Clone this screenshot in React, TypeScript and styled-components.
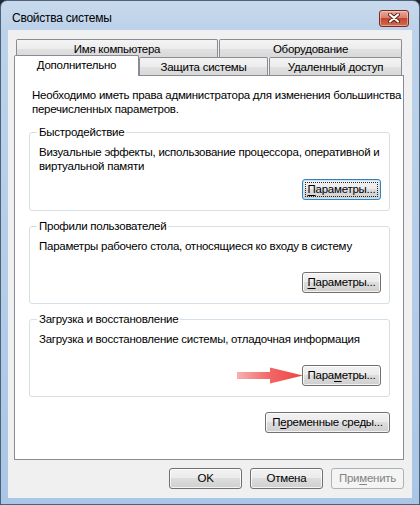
import styled, { createGlobalStyle, css } from "styled-components";

const GlobalStyle = createGlobalStyle`
  html, body {
    margin: 0;
    padding: 0;
    background: #1f2a36;
  }
  body {
    font-family: "Liberation Sans", Arial, sans-serif;
    font-size: 11.5px;
    letter-spacing: -0.25px;
    color: #000;
  }
`;

const Window = styled.div`
  width: 420px;
  height: 505px;
  box-sizing: border-box;
  border: 1px solid #4d6178;
  border-radius: 7px 7px 0 0;
  background: linear-gradient(to bottom, #c8d9ec 0, #bcd2ea 30px, #b3cce8 60%, #aac6e6 100%);
  display: flex;
  flex-direction: column;
  padding: 0 7px 6px 7px;
`;

const TitleBar = styled.div`
  height: 29px;
  box-sizing: border-box;
  padding: 5px 3px 0 4px;
  display: flex;
  align-items: center;
  justify-content: space-between;
`;

const Title = styled.span`
  font-size: 12px;
  color: #000;
`;

const CloseButton = styled.div`
  width: 30px;
  height: 17px;
  box-sizing: border-box;
  border: 1px solid #7a2a1d;
  border-radius: 3px;
  background: linear-gradient(to bottom, #e9a99a 0%, #d8806c 45%, #c4452e 50%, #d26a52 100%);
  box-shadow: inset 0 0 0 1px rgba(255, 220, 210, 0.5);
  display: flex;
  align-items: center;
  justify-content: center;
`;

const Client = styled.div`
  flex: 1;
  display: flex;
  flex-direction: column;
  box-sizing: border-box;
  background: #f0f0f0;
  padding: 9px 8px 9px 6px;
`;

const TabRow = styled.div<{ $inset?: boolean }>`
  display: flex;
  align-items: flex-end;
  height: 18px;
  margin: 0 2px 0 ${({ $inset }) => ($inset ? "2px" : "0")};
`;

const Tab = styled.div<{ $width?: number; $active?: boolean; $spaced?: boolean }>`
  box-sizing: border-box;
  height: 18px;
  ${({ $width }) => ($width ? `width: ${$width}px;` : "flex: 1;")}
  margin-left: ${({ $spaced }) => ($spaced ? "1px" : "0")};
  border: 1px solid #898c95;
  border-bottom: none;
  border-radius: 2px 2px 0 0;
  background: linear-gradient(to bottom, #f4f4f4 0%, #ececec 50%, #e0e0e0 55%, #d9d9d9 100%);
  text-align: center;
  line-height: 18px;
  white-space: nowrap;
  ${({ $active }) =>
    $active &&
    css`
      position: relative;
      z-index: 1;
      height: 21px;
      margin-bottom: -1px;
      background: #fff;
      line-height: 18px;
    `}
`;

const Panel = styled.div`
  flex: 1;
  box-sizing: border-box;
  background: #fff;
  border: 1px solid #898c95;
  padding: 12px 13px 0 14px;
`;

const Text = styled.p`
  margin: 0;
  line-height: 14px;
  white-space: nowrap;
`;

const Intro = styled(Text)`
  margin-left: 3px;
`;

const Group = styled.div<{ $first?: boolean }>`
  margin-top: ${({ $first }) => ($first ? "16px" : "15px")};
  border: 1px solid #d5dfe5;
  border-radius: 3px;
  padding: 0 8px 10px 9px;
`;

const Legend = styled.span`
  display: block;
  width: fit-content;
  margin: -8px 0 6px -2px;
  padding: 0 2px;
  background: #fff;
  line-height: 14px;
`;

const ButtonRow = styled.div<{ $gap: number }>`
  position: relative;
  display: flex;
  justify-content: flex-end;
  gap: 8px;
  margin-top: ${({ $gap }) => $gap}px;
`;

const Button = styled.button<{ $width: number; $focused?: boolean }>`
  position: relative;
  width: ${({ $width }) => $width}px;
  height: 21px;
  box-sizing: border-box;
  padding: 0;
  border: 1px solid #707070;
  border-radius: 3px;
  background: linear-gradient(to bottom, #f2f2f2 0%, #ebebeb 49%, #dddddd 50%, #cfcfcf 100%);
  box-shadow: inset 0 0 0 1px rgba(255, 255, 255, 0.75);
  font-family: "Liberation Sans", Arial, sans-serif;
  font-size: 11.5px;
  letter-spacing: -0.25px;
  color: #000;
  line-height: 19px;
  white-space: nowrap;

  ${({ $focused }) =>
    $focused &&
    css`
      border-color: #3c7fb1;
      box-shadow: inset 0 0 0 1px #c4e5f8;
      &::after {
        content: "";
        position: absolute;
        inset: 2px;
        border: 1px dotted #222;
      }
    `}

  &:disabled {
    border-color: #adb2b5;
    background: #f4f4f4;
    box-shadow: none;
    color: #838383;
  }
`;

const Key = styled.span`
  text-decoration: underline;
  text-underline-offset: 2px;
`;

const Pointer = styled.svg`
  position: absolute;
  top: 2px;
  right: 78px;
`;

const Footer = styled.div`
  display: flex;
  justify-content: flex-end;
  gap: 8px;
  margin-top: 8px;
`;

const EnvRow = styled.div`
  display: flex;
  justify-content: flex-end;
  margin-top: 15px;
`;

const CloseGlyph = () => (
  <svg width="12" height="10" viewBox="0 0 12 10">
    <path d="M2 1.5 L10 8.5 M10 1.5 L2 8.5" stroke="#5a1d14" strokeWidth="4" strokeLinecap="round" />
    <path d="M2 1.5 L10 8.5 M10 1.5 L2 8.5" stroke="#ffffff" strokeWidth="2.2" strokeLinecap="round" />
  </svg>
);

const RedArrow = () => (
  <Pointer width="66" height="17" viewBox="0 0 66 17">
    <defs>
      <linearGradient id="arrowFill" x1="0" x2="1" y1="0" y2="0">
        <stop offset="0" stopColor="#f7b0b0" />
        <stop offset="0.5" stopColor="#f26666" />
        <stop offset="1" stopColor="#ee4444" />
      </linearGradient>
    </defs>
    <polygon points="0,5 33,5 33,0.5 66,8.5 33,16.5 33,12 0,12" fill="url(#arrowFill)" />
  </Pointer>
);

const App = () => {
  return (
    <>
      <GlobalStyle />
      <Window>
        <TitleBar>
          <Title>Свойства системы</Title>
          <CloseButton>
            <CloseGlyph />
          </CloseButton>
        </TitleBar>
        <Client>
          <TabRow $inset>
            <Tab $width={202}>Имя компьютера</Tab>
            <Tab $spaced>Оборудование</Tab>
          </TabRow>
          <TabRow>
            <Tab $width={125} $active>
              Дополнительно
            </Tab>
            <Tab $width={129}>Защита системы</Tab>
            <Tab $spaced>Удаленный доступ</Tab>
          </TabRow>
          <Panel>
            <Intro>
              Необходимо иметь права администратора для изменения большинства
              <br />
              перечисленных параметров.
            </Intro>

            <Group $first>
              <Legend>Быстродействие</Legend>
              <Text>
                Визуальные эффекты, использование процессора, оперативной и
                <br />
                виртуальной памяти
              </Text>
              <ButtonRow $gap={6}>
                <Button $width={79} $focused>
                  <Key>П</Key>араметры...
                </Button>
              </ButtonRow>
            </Group>

            <Group>
              <Legend>Профили пользователей</Legend>
              <Text>Параметры рабочего стола, относящиеся ко входу в систему</Text>
              <ButtonRow $gap={19}>
                <Button $width={79}>
                  <Key>П</Key>араметры...
                </Button>
              </ButtonRow>
            </Group>

            <Group>
              <Legend>Загрузка и восстановление</Legend>
              <Text>Загрузка и восстановление системы, отладочная информация</Text>
              <ButtonRow $gap={19}>
                <RedArrow />
                <Button $width={79}>
                  Пара<Key>м</Key>етры...
                </Button>
              </ButtonRow>
            </Group>

            <EnvRow>
              <Button $width={125}>
                П<Key>е</Key>ременные среды...
              </Button>
            </EnvRow>
          </Panel>
          <Footer>
            <Button $width={73}>OK</Button>
            <Button $width={73}>Отмена</Button>
            <Button $width={73} disabled>
              При<Key>м</Key>енить
            </Button>
          </Footer>
        </Client>
      </Window>
    </>
  );
};

export default App;
